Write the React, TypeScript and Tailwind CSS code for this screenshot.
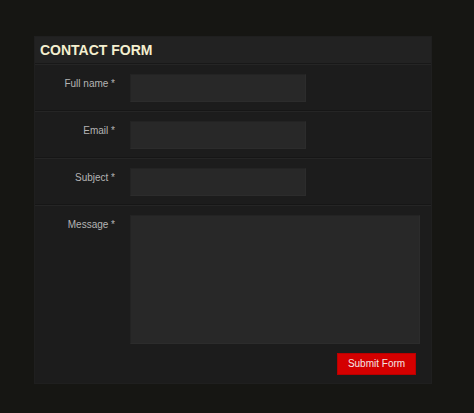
import React from "react";

const fields = [
  { label: "Full name" },
  { label: "Email" },
  { label: "Subject" },
];

function Row({ children, last }: { children: React.ReactNode; last?: boolean }) {
  return (
    <div
      className={
        "flex border-t border-[#252525] " +
        (last ? "" : "border-b border-b-[#161616]")
      }
    >
      {children}
    </div>
  );
}

function Label({ text }: { text: string }) {
  return (
    <div className="w-[80px] shrink-0 pt-[4px] text-right text-[10px] leading-[12px] text-[#b4b4b4]">
      {text} *
    </div>
  );
}

export default function App() {
  return (
    <div
      className="min-h-[413px] w-full bg-[#161613] pl-[34px] pr-[42px] pt-[36px]"
      style={{ fontFamily: '"Liberation Sans", Arial, sans-serif' }}
    >
      <div className="w-[398px] border border-[#1f1f1f] bg-[#1c1c1c]">
        <div className="flex h-[27px] items-center border-b border-[#181818] bg-[#222222] pl-[5px]">
          <h2 className="text-[14px] font-bold leading-none text-[#f4efcf]">CONTACT FORM</h2>
        </div>

        {fields.map((f) => (
          <Row key={f.label}>
            <div className="flex w-full pb-[8px] pt-[9px]">
              <Label text={f.label} />
              <div className="pl-[15px]">
                <input
                  type="text"
                  className="block h-[28px] w-[176px] border border-[#2c2c2c] border-t-[#232323] border-l-[#232323] bg-[#282828] outline-none"
                />
              </div>
            </div>
          </Row>
        ))}

        <Row last>
          <div className="flex w-full flex-col pb-[8px] pt-[9px]">
            <div className="flex">
              <Label text="Message" />
              <div className="pl-[15px]">
                <textarea className="block h-[129px] w-[290px] resize-none border border-[#2c2c2c] border-t-[#232323] border-l-[#232323] bg-[#282828] outline-none" />
              </div>
            </div>
            <div className="flex justify-end pr-[15px] pt-[9px]">
              <button className="h-[22px] w-[79px] border border-[#b80000] bg-[#d40000] text-[10px] leading-none text-[#f3e4e4]">
                Submit Form
              </button>
            </div>
          </div>
        </Row>
      </div>
    </div>
  );
}
